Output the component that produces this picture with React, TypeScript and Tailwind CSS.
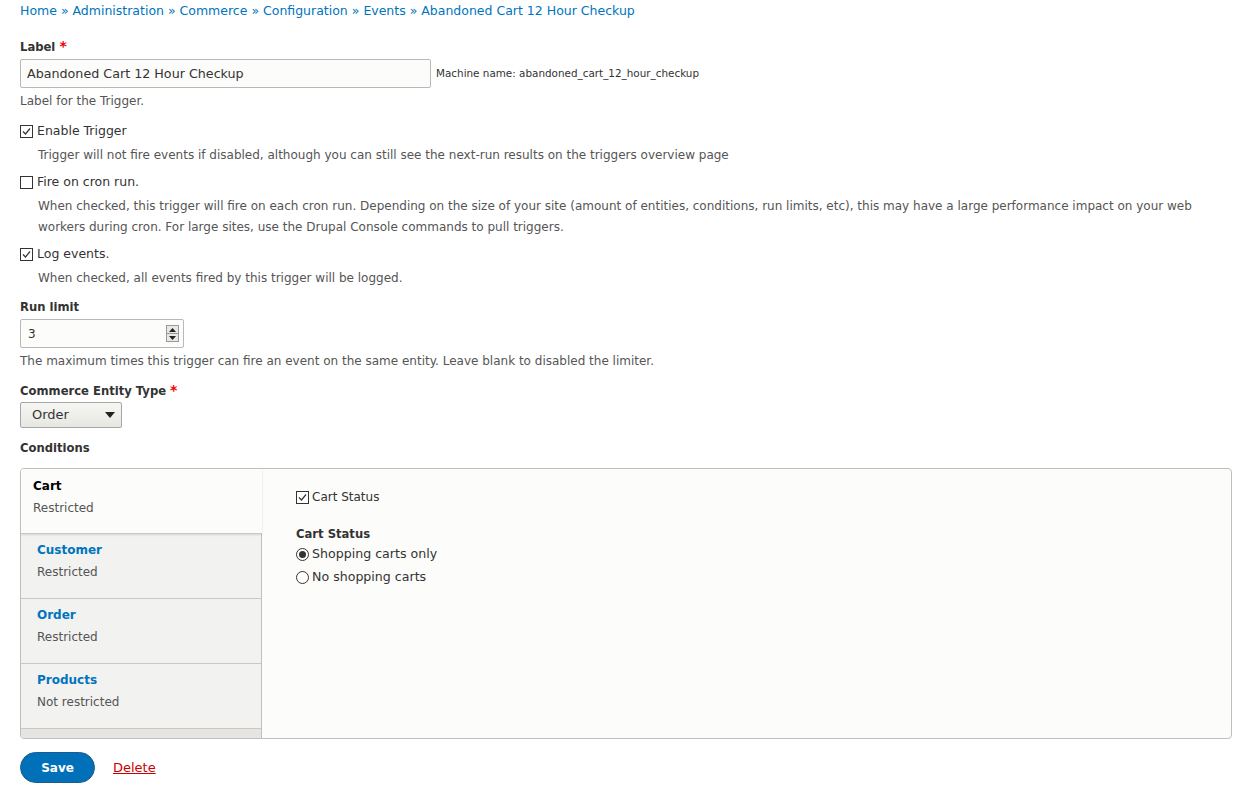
import React from "react"

const FONT = "font-['DejaVu_Sans',sans-serif]"

function Check({ checked }: { checked?: boolean }) {
    return (
        <span className="inline-flex w-[13px] h-[13px] border border-[#333] bg-white items-center justify-center shrink-0">
            {checked && (
                <svg width="11" height="11" viewBox="0 0 11 11">
                    <path d="M2 5.5 L4.5 8 L9 2.5" fill="none" stroke="#333" strokeWidth="1.2" />
                </svg>
            )}
        </span>
    )
}

function Radio({ checked }: { checked?: boolean }) {
    return (
        <span className="inline-flex w-[13px] h-[13px] rounded-full border border-[#333] bg-white items-center justify-center shrink-0">
            {checked && <span className="w-[7px] h-[7px] rounded-full bg-[#333]" />}
        </span>
    )
}

function CheckItem({ label, checked, children }: { label: string; checked?: boolean; children: React.ReactNode }) {
    return (
        <div className="mb-[4px]">
            <div className="flex items-center gap-[4px] h-[24px]">
                <Check checked={checked} />
                <span className="text-[12.5px] text-[#333]">{label}</span>
            </div>
            <div className="mt-[2px] pl-[18px] text-[12px] leading-[21px] text-[#555]">{children}</div>
        </div>
    )
}

const tabs = [
    { title: "Cart", summary: "Restricted", active: true },
    { title: "Customer", summary: "Restricted" },
    { title: "Order", summary: "Restricted" },
    { title: "Products", summary: "Not restricted" },
]

export default function App() {
    return (
        <div className={`${FONT} bg-white min-h-[795px] pl-[20px] pr-[16px] text-[#333]`}>
            {/* Breadcrumb */}
            <div className="pt-[2px] text-[12.5px] leading-[17px] text-[#0074bd]">
                Home » Administration » Commerce » Configuration » Events » Abandoned Cart 12 Hour Checkup
            </div>

            {/* Label */}
            <div className="mt-[19px]">
                <div className="text-[11.6px] font-bold leading-[16px]">
                    Label <span className="text-[#e00] text-[14px]">*</span>
                </div>
                <div className="flex items-center mt-[4px]">
                    <div className="w-[411px] h-[29px] border border-[#b8b8b8] rounded-[2px] bg-[#fcfcfa] flex items-center px-[6px] text-[12.7px] text-[#333]">
                        Abandoned Cart 12 Hour Checkup
                    </div>
                    <span className="ml-[5px] mt-[1px] text-[10.4px] text-[#333]">Machine name: abandoned_cart_12_hour_checkup</span>
                </div>
                <div className="mt-[5px] text-[12px] leading-[16px] text-[#555]">Label for the Trigger.</div>
            </div>

            <div className="mt-[10px]">
                <CheckItem label="Enable Trigger" checked>
                    Trigger will not fire events if disabled, although you can still see the next-run results on the triggers overview page
                </CheckItem>
                <CheckItem label="Fire on cron run.">
                    When checked, this trigger will fire on each cron run. Depending on the size of your site (amount of entities, conditions, run limits, etc), this may have a large performance impact on your web workers during cron. For large sites, use the Drupal Console commands to pull triggers.
                </CheckItem>
                <CheckItem label="Log events." checked>
                    When checked, all events fired by this trigger will be logged.
                </CheckItem>
            </div>

            {/* Run limit */}
            <div className="mt-[10px]">
                <div className="text-[11.6px] font-bold leading-[16px]">Run limit</div>
                <div className="mt-[4px] w-[164px] h-[29px] border border-[#b8b8b8] rounded-[2px] bg-[#fcfcfa] flex items-center justify-between pl-[7px] pr-[4px] text-[12px]">
                    <span>3</span>
                    <span className="flex flex-col w-[13px] h-[17px] border border-[#999] bg-[#e8e8e8]">
                        <span className="flex-1 flex items-center justify-center border-b border-[#999]">
                            <svg width="7" height="4" viewBox="0 0 7 4"><path d="M0 4 L3.5 0 L7 4Z" fill="#222" /></svg>
                        </span>
                        <span className="flex-1 flex items-center justify-center">
                            <svg width="7" height="4" viewBox="0 0 7 4"><path d="M0 0 L3.5 4 L7 0Z" fill="#222" /></svg>
                        </span>
                    </span>
                </div>
                <div className="mt-[5px] text-[12px] leading-[16px] text-[#555]">
                    The maximum times this trigger can fire an event on the same entity. Leave blank to disabled the limiter.
                </div>
            </div>

            {/* Entity type */}
            <div className="mt-[13px]">
                <div className="text-[11.6px] font-bold leading-[16px]">
                    Commerce Entity Type <span className="text-[#e00] text-[14px]">*</span>
                </div>
                <div className="mt-[3px] w-[102px] h-[26px] border border-[#a6a6a6] rounded-[2px] bg-gradient-to-b from-[#f6f6f3] to-[#e7e7e2] flex items-center justify-between pl-[11px] pr-[6px] text-[13px]">
                    <span>Order</span>
                    <svg width="10" height="6" viewBox="0 0 10 6"><path d="M0 0 L10 0 L5 6Z" fill="#222" /></svg>
                </div>
            </div>

            {/* Conditions */}
            <div className="mt-[12px] text-[11.6px] font-bold leading-[16px]">Conditions</div>
            <div className="mt-[12px] h-[271px] border border-[#bfbfbf] rounded-[4px] bg-[#fcfcfa] flex overflow-hidden">
                <div className="w-[241px] bg-[#e6e5e1] border-r border-[#bfbfbf] flex flex-col shrink-0">
                    {tabs.map((t) =>
                        t.active ? (
                            <div key={t.title} className="h-[65px] bg-[#fcfcfa] -mr-[1px] border-b border-[#c8c8c8] shadow-[0_1px_2px_rgba(0,0,0,0.12)] pl-[12px] pt-[9px] relative z-10">
                                <div className="text-[12px] font-bold text-black leading-[16px]">{t.title}</div>
                                <div className="mt-[6px] text-[12px] text-[#555] leading-[16px]">{t.summary}</div>
                            </div>
                        ) : (
                            <div key={t.title} className="h-[65px] bg-[#f2f2f0] border-b border-[#c8c8c8] pl-[16px] pt-[8px]">
                                <div className="text-[12px] font-bold text-[#0074bd] leading-[16px]">{t.title}</div>
                                <div className="mt-[6px] text-[12px] text-[#555] leading-[16px]">{t.summary}</div>
                            </div>
                        )
                    )}
                </div>
                <div className="flex-1 pl-[34px] pt-[20px]">
                    <div className="flex items-center gap-[3px] h-[16px]">
                        <Check checked />
                        <span className="text-[12px] text-[#333]">Cart Status</span>
                    </div>
                    <div className="mt-[21px] text-[11.6px] font-bold leading-[16px]">Cart Status</div>
                    <div className="mt-[2px] flex items-center gap-[3px] h-[20px]">
                        <Radio checked />
                        <span className="text-[12.6px]">Shopping carts only</span>
                    </div>
                    <div className="mt-[3px] flex items-center gap-[3px] h-[20px]">
                        <Radio />
                        <span className="text-[12.6px]">No shopping carts</span>
                    </div>
                </div>
            </div>

            {/* Actions */}
            <div className="mt-[13px] flex items-center gap-[18px]">
                <button className="w-[75px] h-[31px] rounded-full bg-[#0071b8] text-white text-[12px] font-bold border border-[#1e5c90]">
                    Save
                </button>
                <a className="text-[13px] text-[#c00] underline">Delete</a>
            </div>
        </div>
    )
}
